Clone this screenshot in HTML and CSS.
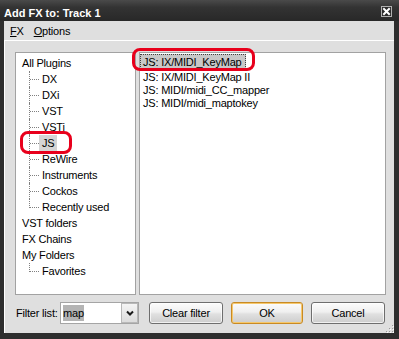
FILE: index.html
```html
<!DOCTYPE html>
<html>
<head>
<meta charset="utf-8">
<link rel="stylesheet" href="styles.css">
</head>
<body>
<div class="win">
  <div class="titlebar">
    <span class="title">Add FX to: Track 1</span>
    <svg class="close" width="11" height="11" viewBox="0 0 11 11">
      <rect x="0.5" y="0.5" width="10" height="10" fill="#2a2a2a" stroke="#b0b0b0"/>
      <path d="M3 3 L8 8 M8 3 L3 8" stroke="#fff" stroke-width="2" stroke-linecap="square"/>
    </svg>
  </div>
  <div class="frame">
    <div class="menu">
      <span><span class="u">F</span>X</span>
      <span><span class="u">O</span>ptions</span>
    </div>
    <div class="client">
      <div class="panes">
        <ul class="tree">
          <li class="row root"><span class="lbl">All Plugins</span></li>
          <li class="row child"><span class="lbl">DX</span></li>
          <li class="row child"><span class="lbl">DXi</span></li>
          <li class="row child"><span class="lbl">VST</span></li>
          <li class="row child"><span class="lbl">VSTi</span></li>
          <li class="row child"><span class="lbl sel">JS</span></li>
          <li class="row child"><span class="lbl">ReWire</span></li>
          <li class="row child"><span class="lbl">Instruments</span></li>
          <li class="row child"><span class="lbl">Cockos</span></li>
          <li class="row child last"><span class="lbl">Recently used</span></li>
          <li class="row root"><span class="lbl">VST folders</span></li>
          <li class="row root"><span class="lbl">FX Chains</span></li>
          <li class="row root"><span class="lbl">My Folders</span></li>
          <li class="row child last"><span class="lbl">Favorites</span></li>
        </ul>
        <div class="list">
          <div class="item sel">JS: IX/MIDI_KeyMap</div>
          <div class="item">JS: IX/MIDI_KeyMap II</div>
          <div class="item">JS: MIDI/midi_CC_mapper</div>
          <div class="item">JS: MIDI/midi_maptokey</div>
        </div>
      </div>
      <div class="bottom">
        <span class="flabel">Filter list:</span>
        <div class="combo">
          <span class="field"><span class="hl">map</span></span>
          <span class="drop">
            <svg width="8" height="6" viewBox="0 0 8 6"><path d="M1 1.5 L4 4.5 L7 1.5" fill="none" stroke="#1a1a1a" stroke-width="2"/></svg>
          </span>
        </div>
        <button class="btn clear">Clear filter</button>
        <button class="btn ok">OK</button>
        <button class="btn cancel">Cancel</button>
      </div>
    </div>
  </div>
  <div class="mark mark-list"></div>
  <div class="mark mark-js"></div>
  <svg class="grip" width="9" height="9" viewBox="0 0 9 9">
    <g fill="#9a9a9a">
      <rect x="7" y="1" width="1" height="1"/>
      <rect x="4" y="4" width="1" height="1"/><rect x="7" y="4" width="1" height="1"/>
      <rect x="1" y="7" width="1" height="1"/><rect x="4" y="7" width="1" height="1"/><rect x="7" y="7" width="1" height="1"/>
    </g>
    <g fill="#ffffff">
      <rect x="8" y="2" width="1" height="1"/>
      <rect x="5" y="5" width="1" height="1"/><rect x="8" y="5" width="1" height="1"/>
      <rect x="2" y="8" width="1" height="1"/><rect x="5" y="8" width="1" height="1"/><rect x="8" y="8" width="1" height="1"/>
    </g>
  </svg>
</div>
</body>
</html>
```

FILE: styles.css
```css
* { box-sizing: border-box; }

body {
  margin: 0;
  width: 399px;
  height: 339px;
  overflow: hidden;
  background: #2e2e2e;
  color: #000;
  font-family: "Liberation Sans", Arial, sans-serif;
  font-size: 11px;
  letter-spacing: -0.2px;
}

.win {
  position: relative;
  width: 399px;
  height: 339px;
  display: flex;
  flex-direction: column;
}

.titlebar {
  flex: none;
  height: 21px;
  display: flex;
  background: linear-gradient(#4a4a4a, #333333 35%, #282828);
  color: #fff;
}

.title {
  flex: 1;
  padding: 5px 0 0 4px;
  line-height: 16px;
  font-weight: bold;
  letter-spacing: 0;
}

.close {
  margin: 6px 7px 0 0;
  flex: none;
}

.frame {
  flex: 1;
  display: flex;
  flex-direction: column;
  border-left: 4px solid #2e2e2e;
  border-right: 5px solid #2e2e2e;
  border-bottom: 6px solid #2e2e2e;
  background: #dfdfdf;
}

.menu {
  flex: none;
  height: 19px;
  padding: 1px 0 0 6px;
  line-height: 18px;
  display: flex;
  gap: 10px;
}

.u { text-decoration: underline; }

.client {
  flex: 1;
  display: flex;
  flex-direction: column;
  border-top: 1px solid #fff;
  border-left: 1px solid #fff;
  padding: 11px 8px 9px 10px;
}

.panes {
  display: flex;
  gap: 3px;
  height: 243px;
}

.tree {
  width: 121px;
  margin: 0;
  padding: 2px 0 0 0;
  list-style: none;
  background: #fff;
  border: 1px solid #a2a2a2;
}

.row {
  position: relative;
  height: 16px;
  line-height: 16px;
  white-space: nowrap;
}

.root { padding-left: 3px; }
.child { padding-left: 23px; }

.child::before {
  content: "";
  position: absolute;
  left: 13px;
  top: 0;
  height: 16px;
  border-left: 1px dotted #808080;
}

.child.last::before { height: 9px; }

.child::after {
  content: "";
  position: absolute;
  left: 14px;
  top: 8px;
  width: 9px;
  border-top: 1px dotted #808080;
}

.lbl {
  display: inline-block;
  padding: 0 3px;
  height: 16px;
}

.lbl.sel { background: #d4d4d4; }

.list {
  width: 247px;
  padding-top: 1px;
  background: #fff;
  border: 1px solid #a2a2a2;
}

.item {
  line-height: 13px;
  padding-left: 3px;
  white-space: nowrap;
}

.item.sel {
  width: fit-content;
  padding: 1px 3px 1px 2px;
  border: 1px dotted #404040;
  background: #c8c8c8;
}

.bottom {
  margin-top: 7px;
  height: 22px;
  display: flex;
  align-items: center;
}

.flabel {
  width: 44px;
  margin-left: 1px;
  line-height: 22px;
}

.combo {
  width: 79px;
  height: 22px;
  display: flex;
  background: #fff;
  border: 1px solid #a5a5a5;
}

.field {
  flex: 1;
  padding: 2px 0 0 2px;
}

.hl {
  display: inline-block;
  height: 16px;
  line-height: 16px;
  background: #b4b4b4;
}

.drop {
  width: 17px;
  height: 20px;
  display: flex;
  align-items: center;
  justify-content: center;
  border: 1px solid #b8b8b8;
  background: linear-gradient(#f4f4f4, #dcdcdc);
}

.btn {
  height: 22px;
  padding: 0;
  font-family: inherit;
  font-size: 11px;
  letter-spacing: -0.2px;
  line-height: 20px;
  color: #000;
  border: 1px solid #6e6e6e;
  border-radius: 3px;
  background: linear-gradient(#fcfcfc, #efefef 45%, #e0e0e0 55%, #cdcdcd);
  box-shadow: inset 0 0 0 1px rgba(255, 255, 255, 0.7);
}

.clear { width: 74px; margin-left: 10px; }
.ok {
  width: 72px;
  margin-left: 8px;
  border-color: #c88a24;
  box-shadow: inset 0 0 0 1px #f6c86c;
}
.cancel { width: 74px; margin-left: 8px; }

.mark {
  position: absolute;
  border: 3px solid #e8001c;
  border-radius: 8px;
}

.mark-list { left: 132px; top: 48px; width: 123px; height: 23px; }
.mark-js { left: 20px; top: 131px; width: 52px; height: 23px; }

.grip {
  position: absolute;
  left: 385px;
  top: 324px;
}
```
